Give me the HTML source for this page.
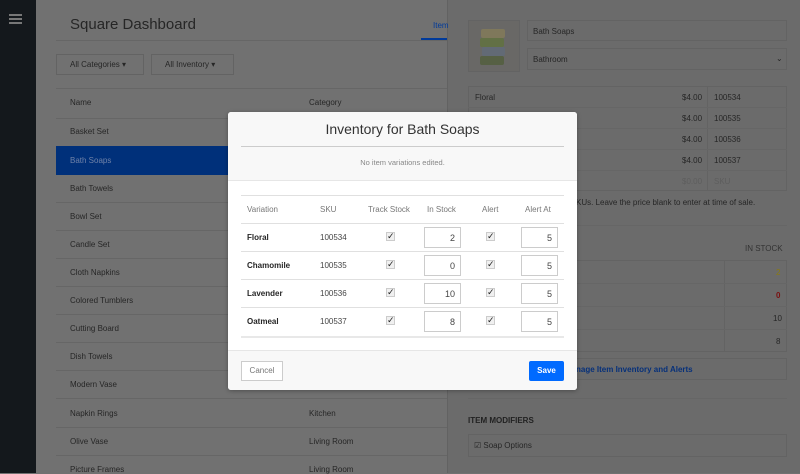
<!DOCTYPE html>
<html><head><meta charset="utf-8"><style>
*{box-sizing:border-box;margin:0;padding:0}
body{width:800px;height:473px;overflow:hidden;font-family:"Liberation Sans",sans-serif;background:#717171;position:relative;color:#222}
.a{position:absolute}
.t{position:absolute;font-size:8px;color:#262626;white-space:nowrap}
.b{position:absolute;border:1px solid #636363}
.hl{position:absolute;height:1px;background:#666}
.ck{position:absolute;width:9px;height:9px;background:#f0f0f0;border:1px solid #ccc;font-size:9px;line-height:7px;text-align:center;color:#222}
.in{position:absolute;width:37px;height:21px;border:1px solid #ccc;background:#fff;font-size:9px;text-align:right;padding:5px 5px 0 0;color:#444}
</style></head><body>
<div class="a" style="left:0;top:0;width:36px;height:473px;background:#14181c"></div>
<div class="a" style="left:9px;top:14px;width:13px;height:2px;background:#777;box-shadow:0 4px 0 #777,0 8px 0 #777"></div>
<div class="a" style="left:447px;top:0;width:353px;height:473px;background:#6b6b6b;border-left:1px solid #626262"></div>
<div class="t" style="left:70px;top:16px;font-size:15px;color:#262626">Square Dashboard</div>
<div class="hl" style="left:56px;top:40px;width:391px"></div>
<div class="t" style="left:433px;top:21px;color:#003a9a;font-size:8px">Item</div>
<div class="a" style="left:421px;top:38px;width:26px;height:2px;background:#003a9a"></div>
<div class="b" style="left:56px;top:54px;width:88px;height:21px"></div>
<div class="t" style="left:70px;top:60px">All Categories ▾</div>
<div class="b" style="left:151px;top:54px;width:83px;height:21px"></div>
<div class="t" style="left:165px;top:60px">All Inventory ▾</div>
<div class="hl" style="left:56px;top:88px;width:391px"></div>
<div class="t" style="left:70px;top:98px">Name</div>
<div class="t" style="left:309px;top:98px">Category</div>
<div class="a" style="left:56px;top:146px;width:391px;height:29px;background:#00307a"></div>
<div class="t" style="left:70px;top:127px">Basket Set</div>
<div class="t" style="left:70px;top:156px;color:#6f82a8">Bath Soaps</div>
<div class="t" style="left:70px;top:184px">Bath Towels</div>
<div class="t" style="left:70px;top:212px">Bowl Set</div>
<div class="t" style="left:70px;top:240px">Candle Set</div>
<div class="t" style="left:70px;top:268px">Cloth Napkins</div>
<div class="t" style="left:70px;top:296px">Colored Tumblers</div>
<div class="t" style="left:70px;top:324px">Cutting Board</div>
<div class="t" style="left:70px;top:352px">Dish Towels</div>
<div class="t" style="left:70px;top:380px">Modern Vase</div>
<div class="t" style="left:70px;top:409px">Napkin Rings</div><div class="t" style="left:309px;top:409px">Kitchen</div>
<div class="t" style="left:70px;top:437px">Olive Vase</div><div class="t" style="left:309px;top:437px">Living Room</div>
<div class="t" style="left:70px;top:465px">Picture Frames</div><div class="t" style="left:309px;top:465px">Living Room</div>
<div class="hl" style="left:56px;top:118px;width:391px"></div>
<div class="hl" style="left:56px;top:202px;width:391px"></div><div class="hl" style="left:56px;top:230px;width:391px"></div>
<div class="hl" style="left:56px;top:258px;width:391px"></div><div class="hl" style="left:56px;top:286px;width:391px"></div>
<div class="hl" style="left:56px;top:314px;width:391px"></div><div class="hl" style="left:56px;top:342px;width:391px"></div>
<div class="hl" style="left:56px;top:370px;width:391px"></div><div class="hl" style="left:56px;top:398px;width:391px"></div>
<div class="hl" style="left:56px;top:427px;width:391px"></div><div class="hl" style="left:56px;top:455px;width:391px"></div>
<div class="b" style="left:468px;top:20px;width:52px;height:52px;background:#696866"></div>
<div class="a" style="left:481px;top:29px;width:24px;height:9px;background:#7f785b;border-radius:2px"></div>
<div class="a" style="left:480px;top:38px;width:24px;height:9px;background:#627045;border-radius:2px"></div>
<div class="a" style="left:482px;top:47px;width:23px;height:9px;background:#626a75;border-radius:2px"></div>
<div class="a" style="left:480px;top:56px;width:24px;height:9px;background:#566044;border-radius:2px"></div>
<div class="b" style="left:527px;top:20px;width:260px;height:21px"></div>
<div class="t" style="left:533px;top:27px">Bath Soaps</div>
<div class="b" style="left:527px;top:48px;width:260px;height:22px"></div>
<div class="t" style="left:533px;top:55px">Bathroom</div><div class="t" style="left:776px;top:54px">⌄</div>
<div class="b" style="left:468px;top:86px;width:319px;height:105px"></div>
<div class="a" style="left:707px;top:86px;width:1px;height:105px;background:#636363"></div>
<div class="hl" style="left:468px;top:107px;width:319px"></div><div class="hl" style="left:468px;top:128px;width:319px"></div>
<div class="hl" style="left:468px;top:149px;width:319px"></div><div class="hl" style="left:468px;top:170px;width:319px"></div>
<div class="t" style="left:475px;top:93px">Floral</div>
<div class="t" style="left:682px;top:93px">$4.00</div><div class="t" style="left:714px;top:93px">100534</div>
<div class="t" style="left:682px;top:114px">$4.00</div><div class="t" style="left:714px;top:114px">100535</div>
<div class="t" style="left:682px;top:135px">$4.00</div><div class="t" style="left:714px;top:135px">100536</div>
<div class="t" style="left:682px;top:156px">$4.00</div><div class="t" style="left:714px;top:156px">100537</div>
<div class="t" style="left:682px;top:177px;color:#5e5e5e">$0.00</div><div class="t" style="left:714px;top:177px;color:#5e5e5e">SKU</div>
<div class="t" style="left:576px;top:198px">KUs. Leave the price blank to enter at time of sale.</div>
<div class="hl" style="left:468px;top:225px;width:319px"></div>
<div class="t" style="left:745px;top:244px;color:#333">IN STOCK</div>
<div class="b" style="left:468px;top:260px;width:319px;height:92px"></div>
<div class="a" style="left:724px;top:260px;width:1px;height:92px;background:#636363"></div>
<div class="hl" style="left:468px;top:283px;width:319px"></div><div class="hl" style="left:468px;top:306px;width:319px"></div><div class="hl" style="left:468px;top:329px;width:319px"></div>
<div class="t" style="left:776px;top:268px;color:#8a7a10">2</div>
<div class="t" style="left:776px;top:291px;color:#7a1010;font-weight:bold">0</div>
<div class="t" style="left:773px;top:314px">10</div>
<div class="t" style="left:776px;top:337px">8</div>
<div class="b" style="left:468px;top:358px;width:319px;height:22px"></div>
<div class="t" style="left:576px;top:365px;color:#06307a;font-weight:bold">nage Item Inventory and Alerts</div>
<div class="hl" style="left:468px;top:398px;width:319px"></div>
<div class="t" style="left:468px;top:416px;font-weight:bold;color:#222">ITEM MODIFIERS</div>
<div class="b" style="left:468px;top:434px;width:319px;height:23px"></div>
<div class="t" style="left:474px;top:441px">☑ Soap Options</div>
<div class="a" style="left:228px;top:112px;width:349px;height:278px;background:#fff;border-radius:3px;overflow:hidden;box-shadow:0 1px 4px rgba(0,0,0,.3)">
<div class="a" style="left:0;top:0;width:349px;height:69px;background:#f8f8f8;border-bottom:1px solid #e6e6e6"></div>
<div class="a" style="left:0;top:238px;width:349px;height:40px;background:#f8f8f8;border-top:1px solid #e6e6e6"></div>
<div class="a" style="left:0;top:9px;width:349px;text-align:center;font-size:14px;color:#333">Inventory for Bath Soaps</div>
<div class="a" style="left:13px;top:34px;width:323px;height:1px;background:#ccc"></div>
<div class="a" style="left:0;top:46px;width:349px;text-align:center;font-size:7.5px;color:#888">No item variations edited.</div>
<div class="a" style="left:13px;top:83px;width:323px;height:1px;background:#e0e0e0"></div>
<div class="a" style="left:13px;top:111px;width:323px;height:1px;background:#e0e0e0"></div>
<div class="a" style="left:13px;top:139px;width:323px;height:1px;background:#e0e0e0"></div>
<div class="a" style="left:13px;top:167px;width:323px;height:1px;background:#e0e0e0"></div>
<div class="a" style="left:13px;top:195px;width:323px;height:1px;background:#e0e0e0"></div>
<div class="a" style="left:13px;top:224px;width:323px;height:2px;background:#e8e8e8"></div>
<div class="t" style="left:19px;top:93px;color:#777">Variation</div>
<div class="t" style="left:92px;top:93px;color:#777">SKU</div>
<div class="t" style="left:140px;top:93px;color:#777">Track Stock</div>
<div class="t" style="left:199px;top:93px;color:#777">In Stock</div>
<div class="t" style="left:254px;top:93px;color:#777">Alert</div>
<div class="t" style="left:297px;top:93px;color:#777">Alert At</div>
<div class="t" style="left:19px;top:121px;font-weight:bold">Floral</div><div class="t" style="left:92px;top:121px;color:#444">100534</div>
<div class="t" style="left:19px;top:149px;font-weight:bold">Chamomile</div><div class="t" style="left:92px;top:149px;color:#444">100535</div>
<div class="t" style="left:19px;top:177px;font-weight:bold">Lavender</div><div class="t" style="left:92px;top:177px;color:#444">100536</div>
<div class="t" style="left:19px;top:205px;font-weight:bold">Oatmeal</div><div class="t" style="left:92px;top:205px;color:#444">100537</div>
<div class="ck" style="left:158px;top:120px">✓</div><div class="ck" style="left:258px;top:120px">✓</div>
<div class="ck" style="left:158px;top:148px">✓</div><div class="ck" style="left:258px;top:148px">✓</div>
<div class="ck" style="left:158px;top:176px">✓</div><div class="ck" style="left:258px;top:176px">✓</div>
<div class="ck" style="left:158px;top:204px">✓</div><div class="ck" style="left:258px;top:204px">✓</div>
<div class="in" style="left:196px;top:115px">2</div><div class="in" style="left:293px;top:115px">5</div>
<div class="in" style="left:196px;top:143px">0</div><div class="in" style="left:293px;top:143px">5</div>
<div class="in" style="left:196px;top:171px">10</div><div class="in" style="left:293px;top:171px">5</div>
<div class="in" style="left:196px;top:199px">8</div><div class="in" style="left:293px;top:199px">5</div>
<div class="a" style="left:13px;top:249px;width:42px;height:20px;border:1px solid #ccc;background:#fff;font-size:8px;color:#777;text-align:center;line-height:18px">Cancel</div>
<div class="a" style="left:301px;top:249px;width:35px;height:20px;background:#006aff;border-radius:2px;font-size:8px;color:#fff;font-weight:bold;text-align:center;line-height:20px">Save</div>
</div>
</body></html>
